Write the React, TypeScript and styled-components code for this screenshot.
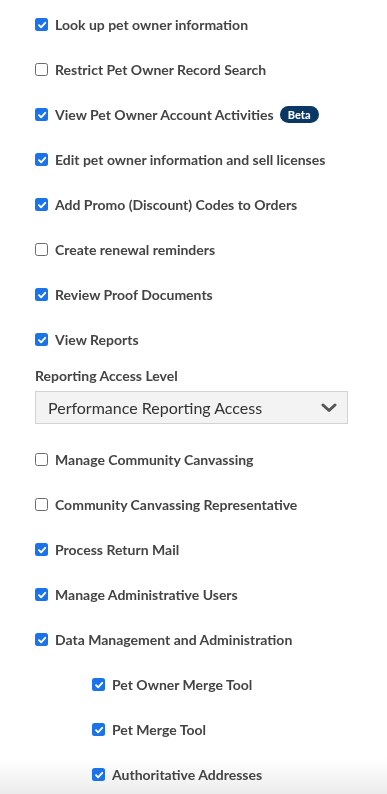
import React from "react";
import styled, { createGlobalStyle } from "styled-components";

const Global = createGlobalStyle`
  html { background: #fff; }
  html, body { margin: 0; padding: 0; }
  body { font-family: Lato, "Open Sans", sans-serif; -webkit-font-smoothing: antialiased; }
`;

const Page = styled.div`
  position: relative;
  z-index: 1;
  padding: 2px 0 0 35px;
  display: flex;
  flex-direction: column;
`;

const Row = styled.label<{ $indent?: boolean }>`
  height: 45px;
  display: flex;
  align-items: center;
  gap: 7px;
  padding-left: ${(p) => (p.$indent ? "57px" : "0")};
  color: #444;
  font-size: 14px;
  font-weight: 700;
`;

const Box = styled.span<{ $checked: boolean }>`
  width: 13px;
  height: 13px;
  box-sizing: border-box;
  border-radius: 2.5px;
  flex: none;
  display: flex;
  align-items: center;
  justify-content: center;
  background: ${(p) => (p.$checked ? "#1a73e8" : "#fff")};
  border: ${(p) => (p.$checked ? "none" : "1px solid #6b6b6b")};
`;

const Badge = styled.span`
  margin-left: -1px;
  background: #0b3764;
  color: #fff;
  font-size: 11px;
  font-weight: 900;
  padding: 2px 8px 2px;
  border-radius: 9px;
  line-height: 13px;
`;

const FieldLabel = styled.div`
  margin-top: 4px;
  color: #444;
  font-size: 14px;
  font-weight: 700;
  line-height: 20px;
`;

const Select = styled.div`
  margin-top: 5px;
  margin-bottom: 13px;
  width: 313px;
  height: 33px;
  box-sizing: border-box;
  background: #f3f3f3;
  border: 1px solid #d3d3d3;
  display: flex;
  align-items: center;
  justify-content: space-between;
  padding: 0 10px 0 12px;
  color: #333;
  font-size: 16px;
`;

const Fade = styled.div`
  position: fixed;
  z-index: 0;
  left: 0;
  right: 0;
  bottom: 0;
  height: 36px;
  background: linear-gradient(to bottom, rgba(255,255,255,1), #ececec);
  pointer-events: none;
`;

const Check = ({ checked }: { checked: boolean }) => (
  <Box $checked={checked}>
    {checked && (
      <svg width="10" height="10" viewBox="0 0 10 10">
        <path d="M2 5.2 L4.1 7.3 L8.2 2.8" stroke="#fff" strokeWidth="1.9" fill="none" strokeLinecap="round" strokeLinejoin="round" />
      </svg>
    )}
  </Box>
);

type Item = { text: string; checked: boolean; indent?: boolean; beta?: boolean };

const top: Item[] = [
  { text: "Look up pet owner information", checked: true },
  { text: "Restrict Pet Owner Record Search", checked: false },
  { text: "View Pet Owner Account Activities", checked: true, beta: true },
  { text: "Edit pet owner information and sell licenses", checked: true },
  { text: "Add Promo (Discount) Codes to Orders", checked: true },
  { text: "Create renewal reminders", checked: false },
  { text: "Review Proof Documents", checked: true },
  { text: "View Reports", checked: true },
];

const bottom: Item[] = [
  { text: "Manage Community Canvassing", checked: false },
  { text: "Community Canvassing Representative", checked: false },
  { text: "Process Return Mail", checked: true },
  { text: "Manage Administrative Users", checked: true },
  { text: "Data Management and Administration", checked: true },
  { text: "Pet Owner Merge Tool", checked: true, indent: true },
  { text: "Pet Merge Tool", checked: true, indent: true },
  { text: "Authoritative Addresses", checked: true, indent: true },
];

const renderRow = (it: Item) => (
  <Row key={it.text} $indent={it.indent}>
    <Check checked={it.checked} />
    <span>{it.text}</span>
    {it.beta && <Badge>Beta</Badge>}
  </Row>
);

export default function App() {
  return (
    <>
      <Global />
      <Fade />
      <Page>
        {top.map(renderRow)}
        <FieldLabel>Reporting Access Level</FieldLabel>
        <Select>
          <span>Performance Reporting Access</span>
          <svg width="16" height="10" viewBox="0 0 16 10">
            <path d="M2 2 L8 7.5 L14 2" stroke="#555" strokeWidth="3" fill="none" strokeLinecap="round" strokeLinejoin="round" />
          </svg>
        </Select>
        {bottom.map(renderRow)}
      </Page>
    </>
  );
}
